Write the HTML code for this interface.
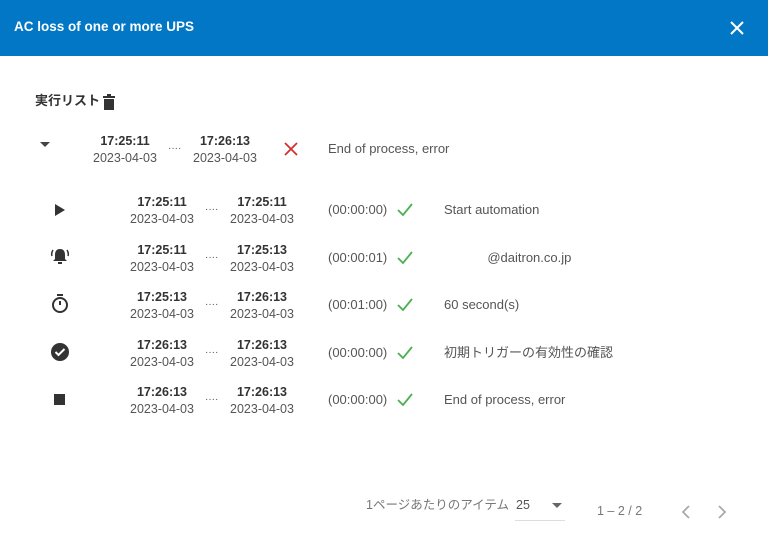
<!DOCTYPE html><html><head><meta charset="utf-8"><style>
body{margin:0;width:768px;height:558px;background:#fff;font-family:"Liberation Sans","Noto Sans CJK JP",sans-serif;color:#444;position:relative;overflow:hidden;font-size:13px}
.a{position:absolute;white-space:nowrap;line-height:16px}
.hd{position:absolute;left:0;top:0;width:768px;height:56px;background:#0277c5}
.t{font-weight:bold;color:#333;text-align:center;width:80px;font-size:12.5px}
.d{color:#555;text-align:center;width:80px;font-size:12.5px}
.g{color:#555}
</style></head><body>
<div class="hd"></div>
<div class="a" style="left:14px;top:19px;color:#fff;font-weight:bold;font-size:13.5px">AC loss of one or more UPS</div>
<svg class="a" style="left:729px;top:20px" width="16" height="16"><path d="M2 2L14 14M14 2L2 14" stroke="#fff" stroke-width="2"/></svg>
<div class="a" style="left:35px;top:93px;font-weight:bold;font-size:13px;color:#333">実行リスト</div>
<svg class="a" style="left:102px;top:94px" width="14" height="16"><rect x="1" y="2" width="12" height="2" fill="#333"/><rect x="5" y="0" width="4" height="2" fill="#333"/><rect x="2" y="5" width="10" height="11" fill="#333"/></svg>
<svg class="a" style="left:40px;top:142px" width="10" height="6"><path d="M0 0H10L5 5Z" fill="#444"/></svg>
<div class="a t" style="left:85px;top:133px">17:25:11</div><div class="a d" style="left:85px;top:150px">2023-04-03</div>
<div class="a g" style="left:168px;top:141px;font-size:10px">····</div>
<div class="a t" style="left:185px;top:133px">17:26:13</div><div class="a d" style="left:185px;top:150px">2023-04-03</div>
<svg class="a" style="left:284px;top:142px" width="14" height="14"><path d="M1 1L13 13M13 1L1 13" stroke="#d32f2f" stroke-width="1.8"/></svg>
<div class="a g" style="left:328px;top:141px">End of process, error</div>

<svg class="a" style="left:54px;top:203px" width="12" height="14"><path d="M1 1L11 7L1 13Z" fill="#333"/></svg>
<svg class="a" style="left:50px;top:247px" width="20" height="18"><path d="M10 2C6 2 5 5 5 8V12L3 14H17L15 12V8C15 5 14 2 10 2Z" fill="#333"/><rect x="8" y="15" width="4" height="2" fill="#333"/><path d="M3 3Q1 6 2 9M17 3Q19 6 18 9" stroke="#333" stroke-width="1.5" fill="none"/></svg>
<svg class="a" style="left:51px;top:294px" width="18" height="20"><circle cx="9" cy="11" r="7" stroke="#333" stroke-width="2" fill="none"/><rect x="6" y="0" width="6" height="2" fill="#333"/><path d="M9 11V7" stroke="#333" stroke-width="2"/></svg>
<svg class="a" style="left:50px;top:342px" width="20" height="20"><circle cx="10" cy="10" r="9" fill="#333"/><path d="M5.5 10L8.5 13L14.5 7" stroke="#fff" stroke-width="2" fill="none"/></svg>
<svg class="a" style="left:54px;top:394px" width="12" height="12"><rect width="11" height="11" fill="#333"/></svg>

<div id="rows"></div>
<script>
var r=[["17:25:11","17:25:11","(00:00:00)","Start automation"],["17:25:11","17:25:13","(00:00:01)","&nbsp;&nbsp;&nbsp;&nbsp;&nbsp;&nbsp;&nbsp;&nbsp;&nbsp;&nbsp;&nbsp;&nbsp;@daitron.co.jp"],["17:25:13","17:26:13","(00:01:00)","60 second(s)"],["17:26:13","17:26:13","(00:00:00)","初期トリガーの有効性の確認"],["17:26:13","17:26:13","(00:00:00)","End of process, error"]];
var h="";r.forEach(function(x,i){var y=194+i*47.5;
h+='<div class="a t" style="left:122px;top:'+y+'px">'+x[0]+'</div><div class="a d" style="left:122px;top:'+(y+17)+'px">2023-04-03</div>';
h+='<div class="a g" style="left:205px;top:'+(y+8)+'px;font-size:10px">····</div>';
h+='<div class="a t" style="left:222px;top:'+y+'px">'+x[1]+'</div><div class="a d" style="left:222px;top:'+(y+17)+'px">2023-04-03</div>';
h+='<div class="a g" style="left:328px;top:'+(y+8)+'px">'+x[2]+'</div>';
h+='<svg class="a" style="left:397px;top:'+(y+9)+'px" width="16" height="13"><path d="M1 7L6 12L15 1" stroke="#4caf50" stroke-width="1.8" fill="none"/></svg>';
h+='<div class="a g" style="left:444px;top:'+(y+8)+'px">'+x[3]+'</div>';});
document.getElementById('rows').innerHTML=h;
</script>
<div class="a" style="left:366px;top:497px;color:#777;font-size:12.5px">1ページあたりのアイテム</div>
<div class="a" style="left:516px;top:497px;color:#555;font-size:12.5px">25</div>
<svg class="a" style="left:552px;top:503px" width="10" height="5"><path d="M0 0H10L5 5Z" fill="#666"/></svg>
<div class="a" style="left:515px;top:520px;width:50px;height:1px;background:#ddd"></div>
<div class="a" style="left:597px;top:503px;color:#777;font-size:12.5px">1 – 2 / 2</div>
<svg class="a" style="left:681px;top:505px" width="10" height="14"><path d="M8 1L2 7L8 13" stroke="#aaa" stroke-width="1.8" fill="none"/></svg>
<svg class="a" style="left:717px;top:505px" width="10" height="14"><path d="M2 1L8 7L2 13" stroke="#aaa" stroke-width="1.8" fill="none"/></svg>
</body></html>
